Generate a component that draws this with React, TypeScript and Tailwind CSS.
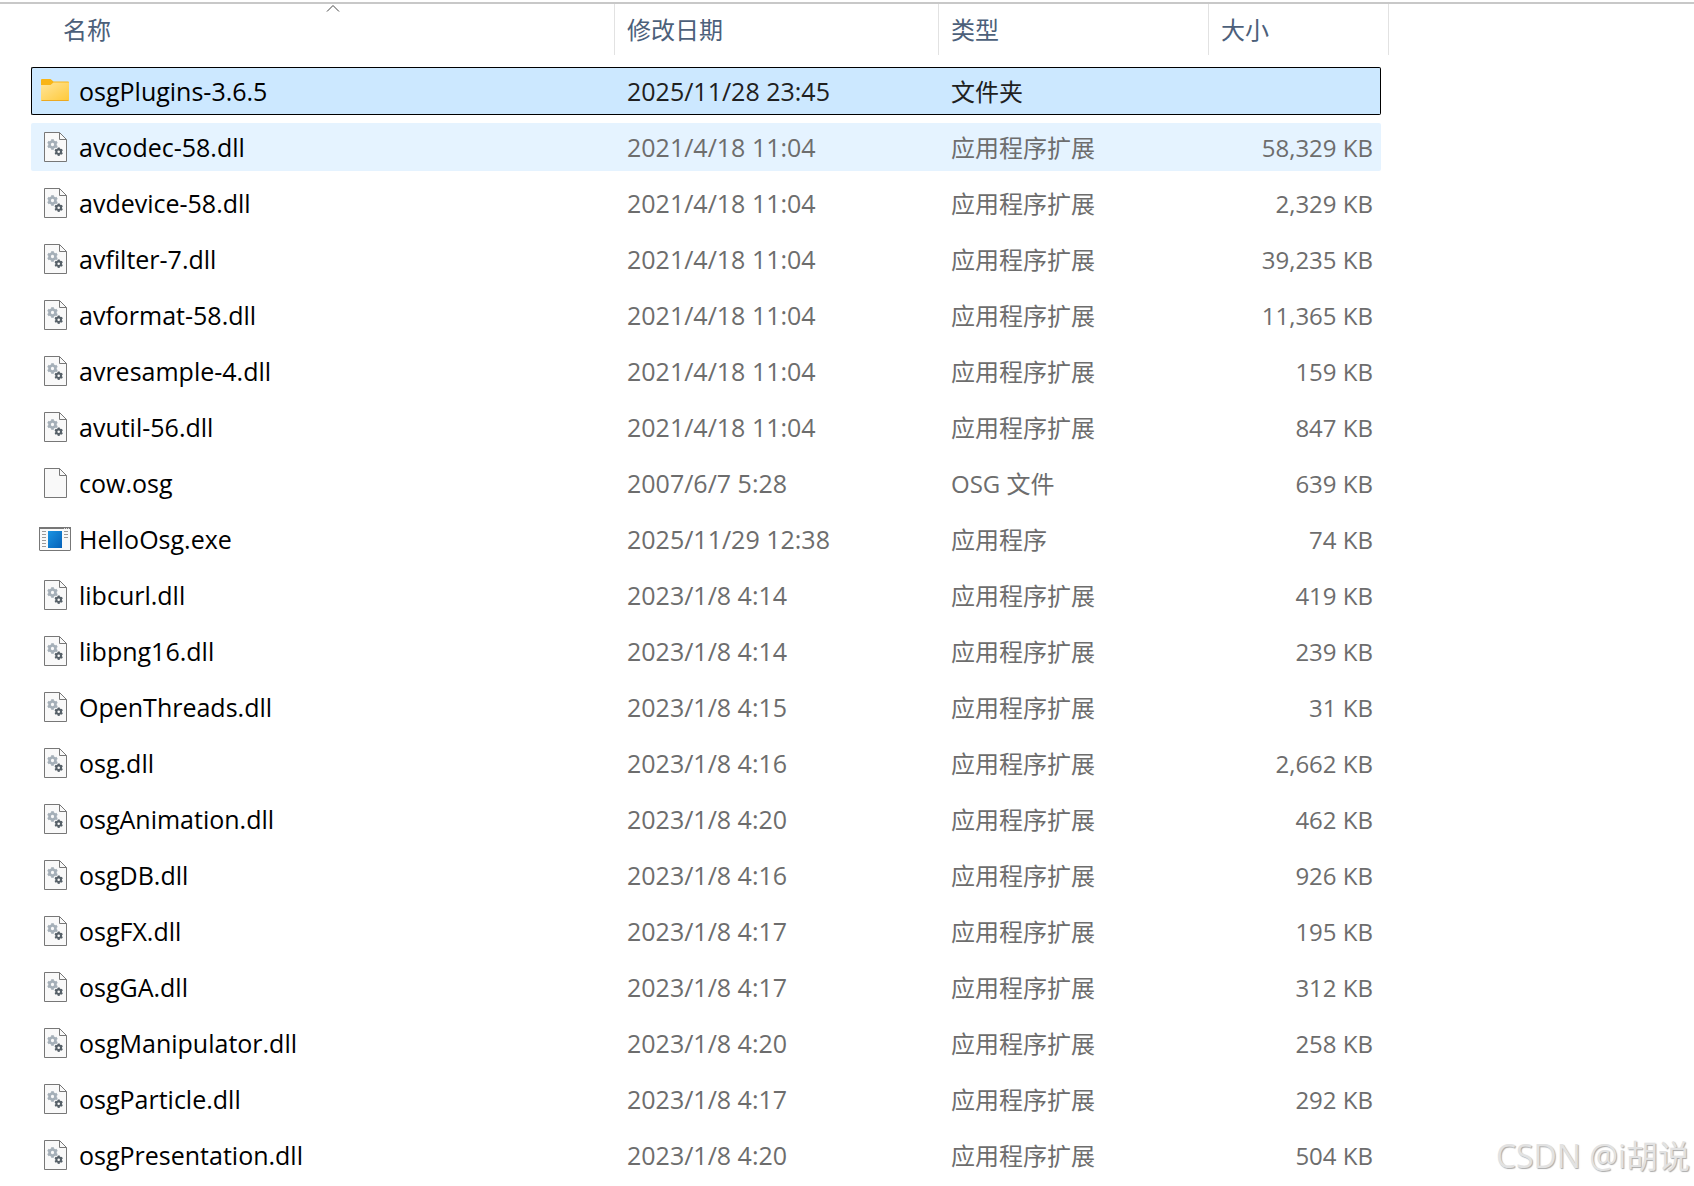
import React, { useState } from 'react';

type FileKind = 'folder' | 'dll' | 'blank' | 'exe';

interface FileEntry {
  name: string;
  date: string;
  type: string;
  size: string;
  kind: FileKind;
}

const dll = (name: string, date: string, size: string): FileEntry => ({
  name,
  date,
  type: '应用程序扩展',
  size,
  kind: 'dll',
});

const files: FileEntry[] = [
  { name: 'osgPlugins-3.6.5', date: '2025/11/28 23:45', type: '文件夹', size: '', kind: 'folder' },
  dll('avcodec-58.dll', '2021/4/18 11:04', '58,329 KB'),
  dll('avdevice-58.dll', '2021/4/18 11:04', '2,329 KB'),
  dll('avfilter-7.dll', '2021/4/18 11:04', '39,235 KB'),
  dll('avformat-58.dll', '2021/4/18 11:04', '11,365 KB'),
  dll('avresample-4.dll', '2021/4/18 11:04', '159 KB'),
  dll('avutil-56.dll', '2021/4/18 11:04', '847 KB'),
  { name: 'cow.osg', date: '2007/6/7 5:28', type: 'OSG 文件', size: '639 KB', kind: 'blank' },
  { name: 'HelloOsg.exe', date: '2025/11/29 12:38', type: '应用程序', size: '74 KB', kind: 'exe' },
  dll('libcurl.dll', '2023/1/8 4:14', '419 KB'),
  dll('libpng16.dll', '2023/1/8 4:14', '239 KB'),
  dll('OpenThreads.dll', '2023/1/8 4:15', '31 KB'),
  dll('osg.dll', '2023/1/8 4:16', '2,662 KB'),
  dll('osgAnimation.dll', '2023/1/8 4:20', '462 KB'),
  dll('osgDB.dll', '2023/1/8 4:16', '926 KB'),
  dll('osgFX.dll', '2023/1/8 4:17', '195 KB'),
  dll('osgGA.dll', '2023/1/8 4:17', '312 KB'),
  dll('osgManipulator.dll', '2023/1/8 4:20', '258 KB'),
  dll('osgParticle.dll', '2023/1/8 4:17', '292 KB'),
  dll('osgPresentation.dll', '2023/1/8 4:20', '504 KB'),
];

const Gear: React.FC<{ cx: number; cy: number; r: number; color: string }> = ({ cx, cy, r, color }) => (
  <g transform={`translate(${cx} ${cy})`} stroke={color} fill="none">
    <circle r={r * 0.56} strokeWidth={r * 0.5} />
    {[0, 60, 120, 180, 240, 300].map((angle) => (
      <path key={angle} d={`M0 ${-r * 0.65}V${-r}`} strokeWidth={r * 0.5} transform={`rotate(${angle})`} />
    ))}
  </g>
);

const FileIcon: React.FC<{ kind: FileKind }> = ({ kind }) => {
  if (kind === 'folder') {
    return (
      <svg className="size-8 shrink-0" viewBox="0 0 32 32" aria-hidden="true">
        <defs>
          <linearGradient id="folder" x1="0" y1="0" x2="1" y2="1">
            <stop offset="0" stopColor="#ffe59b" />
            <stop offset="1" stopColor="#ffc937" />
          </linearGradient>
        </defs>
        <path d="M2 5a1 1 0 0 1 1-1h8.500l3 2.500H29a1 1 0 0 1 1 1V12H2z" fill="#f9b516" />
        <path d="M2 10h9.500l3-2.500H30V25a1 1 0 0 1-1 1H3a1 1 0 0 1-1-1z" fill="url(#folder)" />
        <path d="M2.500 25.500h27" stroke="#eba922" />
      </svg>
    );
  }

  if (kind === 'exe') {
    return (
      <svg className="size-8 shrink-0" viewBox="0 0 32 32" aria-hidden="true">
        <defs>
          <linearGradient id="exe" x1="0" y1="0" x2="1" y2="1">
            <stop offset="0" stopColor="#1a93e2" />
            <stop offset="1" stopColor="#0561b8" />
          </linearGradient>
        </defs>
        <rect x="0.500" y="4.500" width="31" height="23" rx="0.500" fill="#f9f9f9" stroke="#777" />
        <path d="M0 5h32" stroke="#777" strokeWidth="2" />
        <path d="M25 5.500h1m1 0h1m1 0h1" stroke="#ddd" />
        <rect x="9" y="8" width="14" height="17" fill="url(#exe)" />
        <path d="M3 8.500h4M3 11.500h4M3 14.500h4M3 17.500h4M3 20.500h4M3 23.500h4M25 8.500h4M25 11.500h4M25 14.500h4" stroke="#9a9a9a" />
      </svg>
    );
  }

  return (
    <svg className="size-8 shrink-0" viewBox="0 0 32 32" aria-hidden="true">
      <path d="M5.500 1.500h15l7 7v22h-22z" fill="#f9f9f9" stroke="#777" />
      <path d="M20.500 1.500v7h7" fill="none" stroke="#777" />
      {kind === 'dll' && (
        <>
          <Gear cx={13.5} cy={13.5} r={5.3} color="#a5afb8" />
          <Gear cx={19.7} cy={20.7} r={4.2} color="#566068" />
        </>
      )}
    </svg>
  );
};

const headerButton = 'block h-[51px] w-full border-r border-[#e2e2e2] pt-px pl-3 text-left text-[#4c607a]';

const FileRow: React.FC<{ file: FileEntry; selected: boolean; hot: boolean; onSelect: () => void }> = ({
  file,
  selected,
  hot,
  onSelect,
}) => {
  const bg = selected ? 'border-y border-black bg-[#cce8ff]' : hot ? 'bg-[#e5f3ff]' : '';
  const color = selected ? 'text-[#202020]' : 'text-[#6d6d6d]';

  return (
    <tr onClick={onSelect} aria-selected={selected} className="cursor-default">
      <td className={`h-12 rounded-l-xs p-0 ${bg} ${selected ? 'border-l pl-[7px]' : 'pl-2'}`}>
        <div className="flex h-8 items-center gap-2 text-[25px] text-black">
          <FileIcon kind={file.kind} />
          <span>{file.name}</span>
        </div>
      </td>
      <td className={`h-12 p-0 pl-3 text-[25px] ${bg} ${color}`}>{file.date}</td>
      <td className={`h-12 p-0 pt-0.5 pl-3 ${bg} ${color}`}>{file.type}</td>
      <td className={`h-12 rounded-r-xs p-0 pt-0.5 pr-2 text-right ${bg} ${color} ${selected ? 'border-r' : ''}`}>
        {file.size}
      </td>
      <td className="p-0"></td>
    </tr>
  );
};

const App: React.FC = () => {
  const [selected, setSelected] = useState('osgPlugins-3.6.5');

  return (
    <main className="relative mt-0.5 h-screen overflow-hidden border-t-2 border-[#c8c8c8] bg-white pl-[31px] font-['Open_Sans','Noto_Sans_CJK_SC',sans-serif] text-[24px] leading-8">
      <table className="-mt-2 w-full min-w-[1358px] table-fixed border-separate border-spacing-x-0 border-spacing-y-2">
        <colgroup>
          <col className="w-[584px]" />
          <col className="w-[324px]" />
          <col className="w-[270px]" />
          <col className="w-[172px]" />
          <col />
        </colgroup>
        <thead>
          <tr className="h-[55px] align-top">
            <th className="p-0 pl-5 font-normal" aria-sort="ascending">
              <button type="button" className={`relative ${headerButton}`}>
                <svg className="absolute inset-x-0 top-0 mx-auto h-2 w-4" viewBox="0 0 16 8" fill="none" aria-hidden="true">
                  <path d="M2 7.500L8 1.500l6 6" stroke="#444" />
                </svg>
                名称
              </button>
            </th>
            <th className="p-0 font-normal">
              <button type="button" className={headerButton}>修改日期</button>
            </th>
            <th className="p-0 font-normal">
              <button type="button" className={headerButton}>类型</button>
            </th>
            <th className="p-0 font-normal" colSpan={2}>
              <div className="w-[180px]">
                <button type="button" className={headerButton}>大小</button>
              </div>
            </th>
          </tr>
        </thead>
        <tbody>
          {files.map((file, index) => (
            <FileRow
              key={file.name}
              file={file}
              selected={file.name === selected}
              hot={index === 1}
              onSelect={() => setSelected(file.name)}
            />
          ))}
        </tbody>
      </table>

      <div className="pointer-events-none absolute right-1 bottom-3 text-[32px] leading-10 text-[#e2e2e2] [text-shadow:1px_1px_1px_#aaa]">
        CSDN @i胡说
      </div>
    </main>
  );
};

export default App;
